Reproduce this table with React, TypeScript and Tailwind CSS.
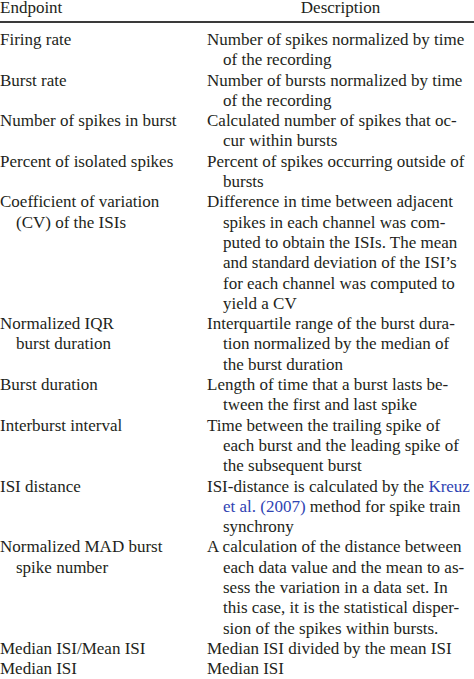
type Part = string | { link: string };
type Line = Part[];

type Row = {
  endpoint: string[];
  description: Line[];
};

const rows: Row[] = [
  { endpoint: ["Firing rate"], description: [["Number of spikes normalized by time"], ["of the recording"]] },
  { endpoint: ["Burst rate"], description: [["Number of bursts normalized by time"], ["of the recording"]] },
  { endpoint: ["Number of spikes in burst"], description: [["Calculated number of spikes that oc-"], ["cur within bursts"]] },
  { endpoint: ["Percent of isolated spikes"], description: [["Percent of spikes occurring outside of"], ["bursts"]] },
  {
    endpoint: ["Coefficient of variation", "(CV) of the ISIs"],
    description: [
      ["Difference in time between adjacent"],
      ["spikes in each channel was com-"],
      ["puted to obtain the ISIs. The mean"],
      ["and standard deviation of the ISI\u2019s"],
      ["for each channel was computed to"],
      ["yield a CV"],
    ],
  },
  {
    endpoint: ["Normalized IQR", "burst duration"],
    description: [["Interquartile range of the burst dura-"], ["tion normalized by the median of"], ["the burst duration"]],
  },
  { endpoint: ["Burst duration"], description: [["Length of time that a burst lasts be-"], ["tween the first and last spike"]] },
  {
    endpoint: ["Interburst interval"],
    description: [["Time between the trailing spike of"], ["each burst and the leading spike of"], ["the subsequent burst"]],
  },
  {
    endpoint: ["ISI distance"],
    description: [
      ["ISI-distance is calculated by the ", { link: "Kreuz" }],
      [{ link: "et al. (2007)" }, " method for spike train"],
      ["synchrony"],
    ],
  },
  {
    endpoint: ["Normalized MAD burst", "spike number"],
    description: [
      ["A calculation of the distance between"],
      ["each data value and the mean to as-"],
      ["sess the variation in a data set. In"],
      ["this case, it is the statistical disper-"],
      ["sion of the spikes within bursts."],
    ],
  },
  { endpoint: ["Median ISI/Mean ISI"], description: [["Median ISI divided by the mean ISI"]] },
  { endpoint: ["Median ISI"], description: [["Median ISI"]] },
];

function renderLine(line: Line) {
  return line.map((part, i) =>
    typeof part === "string" ? (
      <span key={i}>{part}</span>
    ) : (
      <span key={i} className="text-[#2f43b3]">
        {part.link}
      </span>
    )
  );
}

export default function App() {
  return (
    <div
      className="w-[474px] h-[679px] overflow-hidden bg-white text-[#231f20] text-[17px]"
      style={{ fontFamily: '"Liberation Serif", "Times New Roman", serif' }}
    >
      <div className="grid grid-cols-[207px_1fr] h-[23px] leading-[18px] border-b-2 border-[#3a3a3a]">
        <div className="whitespace-nowrap -mt-px">Endpoint</div>
        <div className="text-center -mt-px">Description</div>
      </div>
      <div className="pt-[7px] leading-[20.3px]">
        {rows.map((row, r) => (
          <div key={r} className="grid grid-cols-[207px_1fr]">
            <div className="whitespace-nowrap">
              {row.endpoint.map((l, i) => (
                <div key={i} className={i > 0 ? "pl-4" : ""}>
                  {l}
                </div>
              ))}
            </div>
            <div className="whitespace-nowrap">
              {row.description.map((l, i) => (
                <div key={i} className={i > 0 ? "pl-4" : ""}>
                  {renderLine(l)}
                </div>
              ))}
            </div>
          </div>
        ))}
      </div>
    </div>
  );
}
